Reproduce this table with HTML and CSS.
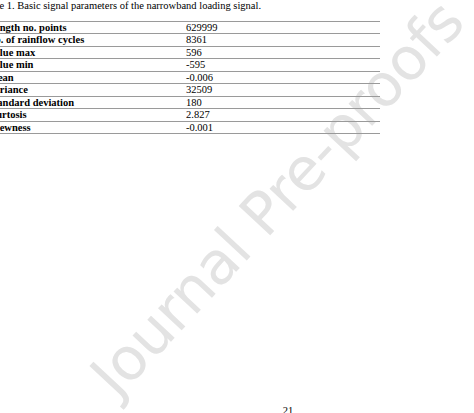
FILE: index.html
```html
<!DOCTYPE html>
<html>
<head>
<meta charset="utf-8">
<link rel="stylesheet" href="styles.css">
</head>
<body>
<main class="page">
  <div class="watermark">Journal Pre-proofs</div>
  <p class="caption">Table 1. Basic signal parameters of the narrowband loading signal.</p>
  <div class="params" role="table">
    <div class="row" role="row"><span class="label">Length no. points</span><span class="value">629999</span></div>
    <div class="row" role="row"><span class="label">No. of rainflow cycles</span><span class="value">8361</span></div>
    <div class="row" role="row"><span class="label">Value max</span><span class="value">596</span></div>
    <div class="row" role="row"><span class="label">Value min</span><span class="value">-595</span></div>
    <div class="row" role="row"><span class="label">Mean</span><span class="value">-0.006</span></div>
    <div class="row" role="row"><span class="label">Variance</span><span class="value">32509</span></div>
    <div class="row" role="row"><span class="label">Standard deviation</span><span class="value">180</span></div>
    <div class="row" role="row"><span class="label">Kurtosis</span><span class="value">2.827</span></div>
    <div class="row" role="row"><span class="label">Skewness</span><span class="value">-0.001</span></div>
  </div>
  <footer class="pageno">21</footer>
</main>
</body>
</html>
```

FILE: styles.css
```css
html, body {
  margin: 0;
  padding: 0;
  background: #ffffff;
  overflow: hidden;
}
body {
  width: 474px;
  height: 413px;
  position: relative;
  font-family: "Liberation Serif", "Times New Roman", serif;
  font-size: 10.5px;
  color: #000;
}
.page {
  position: relative;
  margin-left: -19px;
  width: 614px;
}
.caption {
  margin: 0;
  line-height: 12px;
  white-space: nowrap;
}
.params {
  position: relative;
  margin: 8.5px 0 0 7px;
  width: 392px;
  border-top: 1px solid #9a9a9a;
}
.row {
  display: grid;
  grid-template-columns: 196px 196px;
  height: 11.5px;
  line-height: 11.5px;
  border-bottom: 1px solid #9a9a9a;
  white-space: nowrap;
}
.label {
  font-weight: bold;
}
.value {
  padding-left: 2px;
}
.pageno {
  margin-top: 271px;
  text-align: center;
  line-height: 12px;
}
.watermark {
  position: absolute;
  left: 296px;
  top: 198px;
  transform: translate(-50%, -50%) rotate(-47deg);
  font-family: "DejaVu Sans", sans-serif;
  font-size: 59px;
  letter-spacing: -0.5px;
  color: #e3e3e3;
  white-space: nowrap;
  z-index: 0;
}
```
